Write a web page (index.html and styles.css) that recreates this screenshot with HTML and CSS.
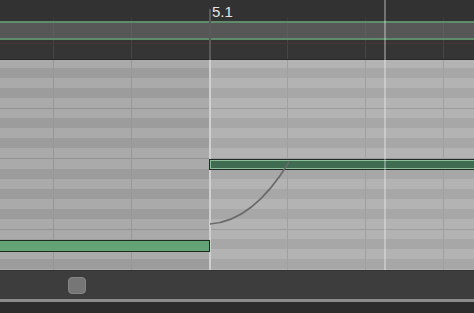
FILE: index.html
```html
<!DOCTYPE html>
<html lang="en">
<head>
  <meta charset="UTF-8" />
  <meta name="viewport" content="width=device-width, initial-scale=1" />
  <title>Piano Roll</title>
  <link rel="stylesheet" href="styles.css">
</head>
<body>

  <div class="editor">
    <div class="ruler">
      <span class="bar-label">5.1</span>
    </div>
    <div class="region-strip"></div>
    <div class="lane"></div>

    <div class="grid">
      <div class="grid-off"></div>
      <div class="grid-region"></div>

      <!-- notes sit on the timeline, so they are placed by time / pitch -->
      <div class="note note-selected" style="left: -2px; top: 180px; width: 212px;"></div>
      <div class="note note-muted" style="left: 209px; top: 99px; right: -2px;"></div>

      <svg class="bend" viewBox="0 0 474 210" width="474" height="210">
        <path d="M210 164 C240 162 266 140 289 102" />
      </svg>
    </div>

    <div class="scroller">
      <div class="scroll-knob"></div>
    </div>
    <div class="divider"></div>
    <div class="footer"></div>

    <div class="bar-line"></div>
    <div class="playhead"></div>
  </div>

</body>
</html>
```

FILE: styles.css
```css
* {
  box-sizing: border-box;
}

body {
  margin: 0;
  background-color: #2c2c2c;
  font-family: 'Liberation Sans', Arial, sans-serif;
  overflow: hidden;
}

.editor {
  position: relative;
  width: 474px;
  height: 313px;
  display: flex;
  flex-direction: column;
}

/* beat lines every 78px, first one at x=53 */
.ruler,
.region-strip,
.lane,
.grid-off {
  background-repeat: repeat-x;
}

.ruler {
  position: relative;
  height: 21px;
  background-color: #323232;
  background-image: linear-gradient(to bottom, transparent 17px, #3c3c3c 17px);
  background-image:
    linear-gradient(to right, transparent 77px, #3b3b3b 77px 78px),
    none;
  background-size: 78px 4px;
  background-position: -24px 17px;
}

.bar-label {
  position: absolute;
  left: 212px;
  top: 4px;
  font-size: 15px;
  line-height: 15px;
  color: #e4e4e4;
}

.region-strip {
  height: 19px;
  border-top: 2px solid #5f8d6b;
  border-bottom: 2px solid #5f8d6b;
  background-color: #575757;
  background-image: linear-gradient(to right, transparent 77px, #5d5d5d 77px 78px);
  background-size: 78px 100%;
  background-position: -24px 0;
}

.lane {
  height: 20px;
  border-bottom: 1px solid #282828;
  background-color: #353535;
  background-image:
    linear-gradient(to bottom, transparent 3px, #4a3434 3px 4px, transparent 4px),
    linear-gradient(to right, transparent 77px, #474747 77px 78px);
  background-size: 100% 100%, 78px 100%;
  background-position: 0 0, -24px 0;
  background-repeat: no-repeat, repeat-x;
}

/* piano rows: 12 semitones in 121px, E/F line at y=48 */
.grid {
  position: relative;
  height: 210px;
  display: flex;
  overflow: hidden;
}

.grid-off {
  width: 209px;
  background-image:
    linear-gradient(to right, transparent 77px, #979797 77px 78px),
    linear-gradient(to bottom,
      #929292 0 1px, #aaaaaa 1px 10.08px, #9c9c9c 10.08px 20.17px,
      #aaaaaa 20.17px 30.25px, #9c9c9c 30.25px 40.33px, #aaaaaa 40.33px 50.42px,
      #929292 50.42px 51.42px, #aaaaaa 51.42px 60.5px, #9c9c9c 60.5px 70.58px,
      #aaaaaa 70.58px 80.67px, #9c9c9c 80.67px 90.75px, #aaaaaa 90.75px 100.83px,
      #9c9c9c 100.83px 110.92px, #aaaaaa 110.92px 121px);
  background-size: 78px 100%, 100% 121px;
  background-position: -24px 0, 0 48px;
  background-repeat: repeat-x, repeat-y;
}

.grid-region {
  flex: 1;
  border-left: 2px solid #cfcfcf;
  background-image:
    linear-gradient(to right, transparent 77px, #a0a0a0 77px 78px),
    linear-gradient(to bottom,
      #9c9c9c 0 1px, #b3b3b3 1px 10.08px, #a7a7a7 10.08px 20.17px,
      #b3b3b3 20.17px 30.25px, #a7a7a7 30.25px 40.33px, #b3b3b3 40.33px 50.42px,
      #9c9c9c 50.42px 51.42px, #b3b3b3 51.42px 60.5px, #a7a7a7 60.5px 70.58px,
      #b3b3b3 70.58px 80.67px, #a7a7a7 80.67px 90.75px, #b3b3b3 90.75px 100.83px,
      #a7a7a7 100.83px 110.92px, #b3b3b3 110.92px 121px);
  background-size: 78px 100%, 100% 121px;
  background-position: -1px 0, 0 48px;
  background-repeat: repeat-x, repeat-y;
}

.note {
  position: absolute;
  height: 12px;
  border: 1px solid #1d2a21;
}

.note-selected {
  background-color: #63a375;
}

.note-muted {
  height: 11px;
  background-color: #3f6b51;
  border-color: #222a25;
  box-shadow: inset 0 0 0 1px #8cbd9b;
}

.bend {
  position: absolute;
  left: 0;
  top: 0;
  pointer-events: none;
}

.bend path {
  fill: none;
  stroke: #6a6a6a;
  stroke-width: 1.6;
}

.scroller {
  height: 29px;
  border-top: 1px solid #333333;
  background-color: #3d3d3d;
  padding: 6px 0 0 68px;
}

.scroll-knob {
  width: 18px;
  height: 17px;
  border-radius: 4px;
  background-color: #767676;
  border: 1px solid #858585;
}

.divider {
  height: 3px;
  background-color: #8b8b8b;
}

.footer {
  flex: 1;
  background-color: #2c2c2c;
}

.bar-line {
  position: absolute;
  left: 209px;
  top: 9px;
  width: 2px;
  height: 51px;
  background-color: #5a5a5a;
}

.playhead {
  position: absolute;
  left: 384px;
  top: 0;
  width: 2px;
  height: 270px;
  background-color: rgba(255, 255, 255, 0.32);
}
```
